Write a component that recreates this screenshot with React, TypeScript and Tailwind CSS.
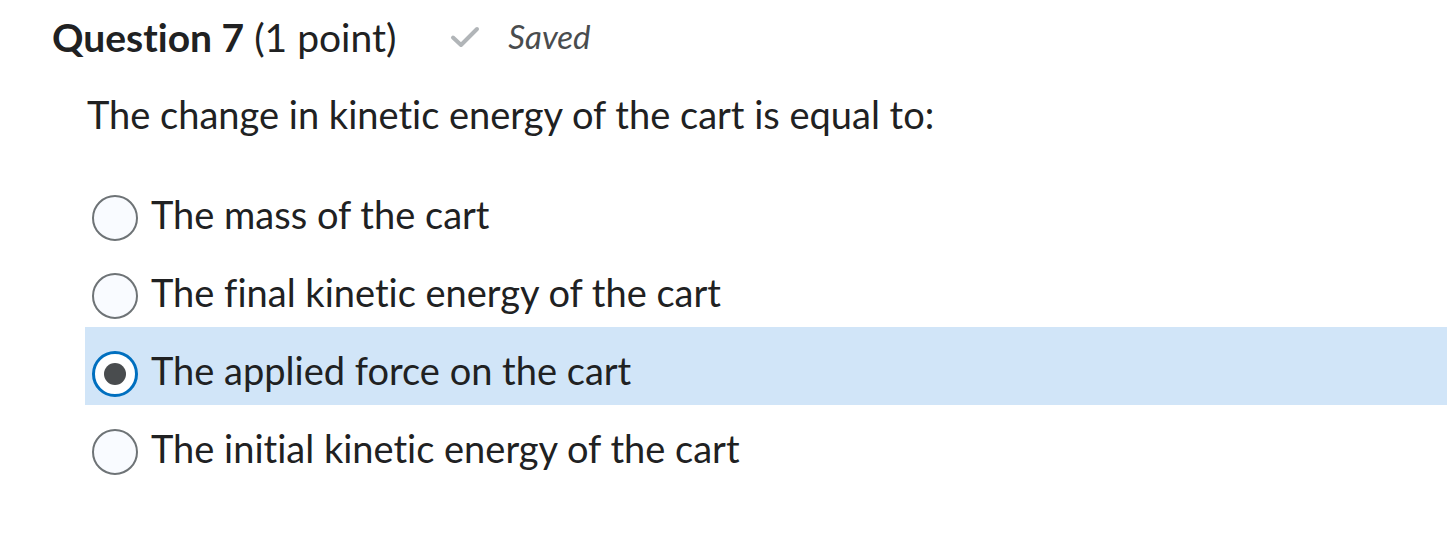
import React from 'react';

const options = [
  'The mass of the cart',
  'The final kinetic energy of the cart',
  'The applied force on the cart',
  'The initial kinetic energy of the cart',
];

function Radio({ checked }: { checked: boolean }) {
  if (checked) {
    return (
      <span className="flex h-[46px] w-[46px] shrink-0 items-center justify-center rounded-full border-[3px] border-[#006fbf] bg-white">
        <span className="h-[22px] w-[22px] rounded-full bg-[#494c4e]" />
      </span>
    );
  }
  return <span className="block h-[46px] w-[46px] shrink-0 rounded-full border-2 border-[#6e7376] bg-[#f9fbff]" />;
}

export default function App() {
  const selected = 2;

  return (
    <div className="min-h-[533px] bg-white font-['Lato',sans-serif] text-[#202122] [font-variant-ligatures:none]">
      <div className="flex items-center pl-[52px] pt-[12px]">
        <h2 className="text-[39px] leading-[48px]">
          <span className="font-bold">Question 7</span> <span>(1 point)</span>
        </h2>
        <div className="ml-[54px] flex items-center gap-[28px] text-[#494c4e]">
          <svg width="30" height="22" viewBox="0 0 30 22" fill="none">
            <path d="M3 11.5l8 7.5L27 3" stroke="#b1b5b8" strokeWidth="4" strokeLinecap="round" strokeLinejoin="round" />
          </svg>
          <span className="text-[33px] italic">Saved</span>
        </div>
      </div>

      <div className="pl-[85px]">
        <p className="pl-[2px] pt-[29px] text-[38px] leading-[46px]">The change in kinetic energy of the cart is equal to:</p>

        <div className="mt-[34px]">
          {options.map((o, i) => (
            <label
              key={o}
              className={`flex items-start gap-[13px] pl-[7px] pt-[24px] pb-[8px] ${i === selected ? 'bg-[#d1e5f8]' : ''}`}
            >
              <Radio checked={i === selected} />
              <span className="mt-[-3px] text-[38px] leading-[44px]">{o}</span>
            </label>
          ))}
        </div>
      </div>
    </div>
  );
}
